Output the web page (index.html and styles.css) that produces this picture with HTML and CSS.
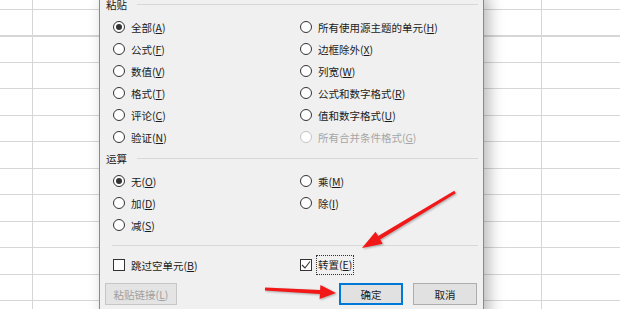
FILE: index.html
```html
<!DOCTYPE html>
<html lang="zh-CN">
<head>
  <meta charset="UTF-8">
  <meta name="viewport" content="width=device-width, initial-scale=1.0">
  <title>选择性粘贴</title>
  <link rel="stylesheet" href="styles.css">
</head>
<body>
  <div class="dialog">
    <div class="group-title"><span>粘贴</span><i class="rule"></i></div>
    <div class="options">
      <label class="opt"><span class="radio on"></span>全部(<u>A</u>)</label>
      <label class="opt"><span class="radio"></span>所有使用源主题的单元(<u>H</u>)</label>
      <label class="opt"><span class="radio"></span>公式(<u>F</u>)</label>
      <label class="opt"><span class="radio"></span>边框除外(<u>X</u>)</label>
      <label class="opt"><span class="radio"></span>数值(<u>V</u>)</label>
      <label class="opt"><span class="radio"></span>列宽(<u>W</u>)</label>
      <label class="opt"><span class="radio"></span>格式(<u>T</u>)</label>
      <label class="opt"><span class="radio"></span>公式和数字格式(<u>R</u>)</label>
      <label class="opt"><span class="radio"></span>评论(<u>C</u>)</label>
      <label class="opt"><span class="radio"></span>值和数字格式(<u>U</u>)</label>
      <label class="opt"><span class="radio"></span>验证(<u>N</u>)</label>
      <label class="opt disabled"><span class="radio"></span>所有合并条件格式(<u>G</u>)</label>
    </div>

    <div class="group-title"><span>运算</span><i class="rule"></i></div>
    <div class="options">
      <label class="opt"><span class="radio on"></span>无(<u>O</u>)</label>
      <label class="opt"><span class="radio"></span>乘(<u>M</u>)</label>
      <label class="opt"><span class="radio"></span>加(<u>D</u>)</label>
      <label class="opt"><span class="radio"></span>除(<u>I</u>)</label>
      <label class="opt"><span class="radio"></span>减(<u>S</u>)</label>
    </div>

    <div class="separator"></div>

    <div class="options checks">
      <label class="opt"><span class="box"></span>跳过空单元(<u>B</u>)</label>
      <label class="opt">
        <span class="box">
          <svg width="10" height="10" viewBox="0 0 10 10"><polyline points="1,5 4,8 9,1.5" fill="none" stroke="#333" stroke-width="1.1"/></svg>
        </span>
        <span class="focus">转置(<u>E</u>)</span>
      </label>
    </div>

    <div class="buttons">
      <button class="btn link" disabled>粘贴链接(<u>L</u>)</button>
      <span class="spacer"></span>
      <button class="btn ok">确定</button>
      <button class="btn cancel">取消</button>
    </div>
  </div>

  <!-- annotation arrows drawn over the screenshot -->
  <svg class="arrows" width="620" height="309" viewBox="0 0 620 309">
    <polygon points="362,248 382.7,243.7 380.1,239.4 455.7,193.2 454.3,190.8 378.1,236 375.5,231.7"/>
    <polygon points="336,293 319.6,299.1 319.9,294.1 264.9,290.4 265.1,287.6 320.1,290.1 320.4,285.1"/>
  </svg>
</body>
</html>
```

FILE: styles.css
```css
html, body {
  margin: 0;
  width: 100%;
  height: 100%;
  overflow: hidden;
}

body {
  position: relative;
  font-family: "Noto Sans CJK SC", "Noto Sans", sans-serif;
  font-size: 10.5px;
  color: #1b1b1b;
  background-color: #fff;
  background-image:
    linear-gradient(to right, transparent 32px, #d6d6d6 32px, #d6d6d6 33px, transparent 33px, transparent 541px, #d6d6d6 541px, #d6d6d6 542px, transparent 542px),
    repeating-linear-gradient(to bottom, #d6d6d6 0, #d6d6d6 1px, transparent 1px, transparent 26.5px);
  background-position: 0 0, 0 9px;
}

.dialog {
  position: absolute;
  left: 99px;
  top: -7px;
  width: 385px;
  box-sizing: border-box;
  padding: 0 5px 20px 6px;
  background: #f0f0f0;
  border: 1px solid #8a8a8a;
  box-shadow: 5px 3px 14px rgba(0, 0, 0, 0.28);
}

.group-title {
  display: flex;
  align-items: center;
  height: 20px;
}

.group-title .rule {
  flex: 1;
  margin-left: 10px;
  border-top: 1px solid #d8d8d8;
}

.options {
  display: grid;
  grid-template-columns: 187px 1fr;
  grid-auto-rows: 22px;
  margin-top: 2px;
  padding-left: 7px;
}

.opt {
  display: flex;
  align-items: center;
  white-space: nowrap;
}

.opt u {
  text-underline-offset: 1px;
}

.radio,
.box {
  flex: none;
  position: relative;
  width: 12px;
  height: 12px;
  box-sizing: border-box;
  margin-right: 6px;
  border: 1px solid #333;
  background: #fff;
}

.radio {
  border-radius: 50%;
}

.radio.on::after {
  content: "";
  position: absolute;
  left: 2px;
  top: 2px;
  width: 6px;
  height: 6px;
  border-radius: 50%;
  background: #333;
}

.box svg {
  position: absolute;
  left: 0;
  top: 0;
}

.opt.disabled {
  color: #a6a6a6;
}

.opt.disabled .radio {
  border-color: #c4c4c4;
}

.separator {
  margin: 9px 0 0 6px;
  border-top: 1px solid #d8d8d8;
}

.checks {
  grid-auto-rows: 20px;
  margin-top: 9px;
}

.focus {
  padding: 1px 1px 2px;
  margin-left: -2px;
  border: 1px dotted #333;
}

.buttons {
  display: flex;
  margin: 8px 1px 0 -1px;
}

.spacer {
  flex: 1;
}

.btn {
  height: 22px;
  padding: 0;
  font: inherit;
  color: #1b1b1b;
  background: #e1e1e1;
  border: 1px solid #adadad;
}

.btn.link {
  width: 72px;
  color: #a0a0a0;
  background: #e4e4e4;
  border-color: #c6c6c6;
}

.btn.ok {
  width: 64px;
  border-color: #0078d7;
  box-shadow: inset 0 0 0 1px #0078d7;
}

.btn.cancel {
  width: 64px;
  margin-left: 10px;
}

.arrows {
  position: absolute;
  left: 0;
  top: 0;
  pointer-events: none;
  fill: #f21818;
  filter: drop-shadow(1px 1px 1px rgba(0, 0, 0, 0.3));
}
```
